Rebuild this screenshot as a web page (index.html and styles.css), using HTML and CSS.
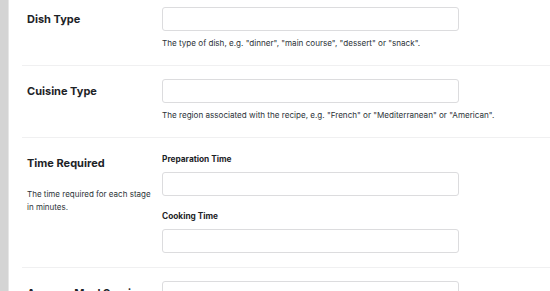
FILE: index.html
```html
<!DOCTYPE html>
<html lang="en">
<head>
  <meta charset="UTF-8">
  <meta name="viewport" content="width=device-width, initial-scale=1.0">
  <title>Recipe Details</title>
  <link rel="stylesheet" href="styles.css">
</head>
<body>
<div class="admin-wrap">
  <div class="admin-menu"></div>

  <div class="form-table">
    <div class="field-row first">
      <div class="field-label">Dish Type</div>
      <div class="field-input">
        <input type="text" class="text-input">
        <p class="description">The type of dish, e.g. "dinner", "main course", "dessert" or "snack".</p>
      </div>
    </div>

    <div class="field-row">
      <div class="field-label">Cuisine Type</div>
      <div class="field-input">
        <input type="text" class="text-input">
        <p class="description">The region associated with the recipe, e.g. "French" or "Mediterranean" or "American".</p>
      </div>
    </div>

    <div class="field-row time-row">
      <div class="field-label">
        Time Required
        <p class="label-description">The time required for each stage in minutes.</p>
      </div>
      <div class="field-input">
        <label class="sub-label">Preparation Time</label>
        <input type="text" class="text-input">
        <label class="sub-label cooking">Cooking Time</label>
        <input type="text" class="text-input">
      </div>
    </div>

    <div class="field-row">
      <div class="field-label">Average Meal Servings</div>
      <div class="field-input">
        <input type="text" class="text-input">
      </div>
    </div>
  </div>
</div>
</body>
</html>
```

FILE: styles.css
```css
body {
  margin: 0;
  background: #fff;
  font-family: Inter, "Noto Sans", sans-serif;
  color: #1d2327;
  overflow: hidden;
}

.admin-wrap {
  display: flex;
  min-height: 291px;
}

.admin-menu {
  width: 8px;
  flex-shrink: 0;
  background: #d4d4d4;
  border-right: 1px solid #e6e6e6;
}

.form-table {
  flex: 1;
  margin-left: 13px;
  margin-top: -6px;
}

.field-row {
  display: grid;
  grid-template-columns: 140px 1fr;
  padding: 13px 0 16px;
  border-bottom: 1px solid #f0f0f1;
}

.time-row {
  padding-bottom: 14px;
}

.field-label {
  padding-left: 5px;
  font-size: 11px;
  font-weight: 700;
  line-height: 24px;
}

.label-description {
  margin: 13px 0 0;
  font-size: 8px;
  font-weight: 400;
  line-height: 12.5px;
  color: #2c3338;
  width: 130px;
}

.field-input {
  display: flex;
  flex-direction: column;
  align-items: flex-start;
}

.text-input {
  box-sizing: border-box;
  width: 297px;
  height: 24px;
  margin: 0;
  border: 1px solid #dcdcde;
  border-radius: 3px;
  background: #fff;
}

.description {
  margin: 6px 0 0;
  font-size: 8.1px;
  line-height: 12px;
  color: #2c3338;
}

.sub-label {
  font-size: 8.3px;
  font-weight: 700;
  line-height: 16px;
  margin-bottom: 5px;
}

.sub-label.cooking {
  margin-top: 12px;
}
```
